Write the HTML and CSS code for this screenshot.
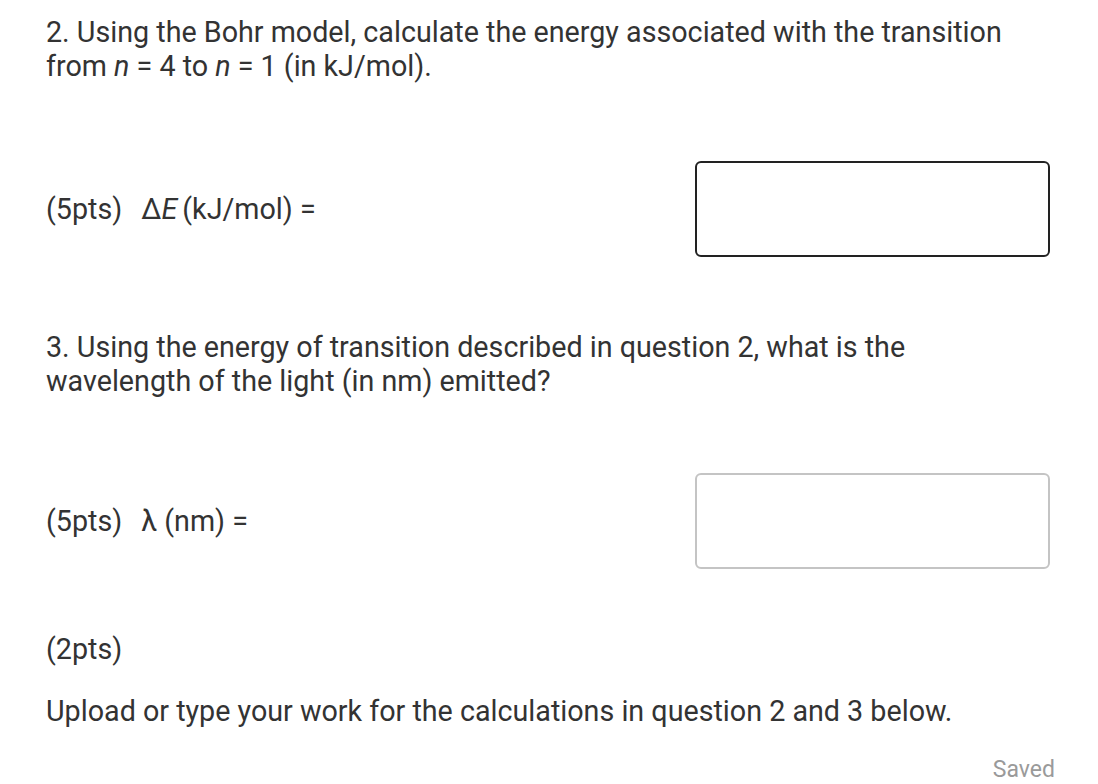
FILE: index.html
```html
<!DOCTYPE html>
<html>
<head>
<meta charset="utf-8">
<link rel="stylesheet" href="styles.css">
</head>
<body>
<div class="page">
  <p class="question q2">2. Using the Bohr model, calculate the energy associated with the transition from <i>n</i> = 4 to <i>n</i> = 1 (in kJ/mol).</p>
  <div class="answer-row row1">
    <div class="label">(5pts)<span class="sym">Δ<i>E</i></span><span class="unit">(kJ/mol) =</span></div>
    <div class="box box-active"></div>
  </div>
  <p class="question q3">3. Using the energy of transition described in question 2, what is the wavelength of the light (in nm) emitted?</p>
  <div class="answer-row row2">
    <div class="label">(5pts)<span class="sym">λ</span> (nm) =</div>
    <div class="box"></div>
  </div>
  <p class="pts">(2pts)</p>
  <p class="upload">Upload or type your work for the calculations in question 2 and 3 below.</p>
  <div class="status"><span class="saved">Saved</span></div>
</div>
</body>
</html>
```
FILE: styles.css
```css
html, body {
  margin: 0;
  padding: 0;
  background: #ffffff;
}
.page {
  font-family: Roboto, "Liberation Sans", sans-serif;
  color: #333333;
  font-size: 28.7px;
  line-height: 34px;
  padding: 15px 48px 0 46px;
}
.question {
  margin: 0;
  max-width: 980px;
}
.q3 {
  margin-top: 73px;
  max-width: 950px;
}
.answer-row {
  display: flex;
  align-items: center;
  justify-content: space-between;
}
.row1 { margin-top: 78px; }
.row2 { margin-top: 75px; }
.label {
  white-space: nowrap;
}
.sym {
  margin-left: 19px;
}
.unit {
  margin-left: 5px;
}
.box {
  width: 351px;
  height: 92px;
  border: 2px solid #c4c4c4;
  border-radius: 6px;
}
.box-active {
  border-color: #222222;
}
.pts {
  margin: 63px 0 0;
}
.upload {
  margin: 28px 0 0;
}
.status {
  display: flex;
  justify-content: flex-end;
  margin-top: 28px;
}
.saved {
  font-size: 23px;
  line-height: 28px;
  color: #9a9a9a;
  margin-right: -5px;
}
```
